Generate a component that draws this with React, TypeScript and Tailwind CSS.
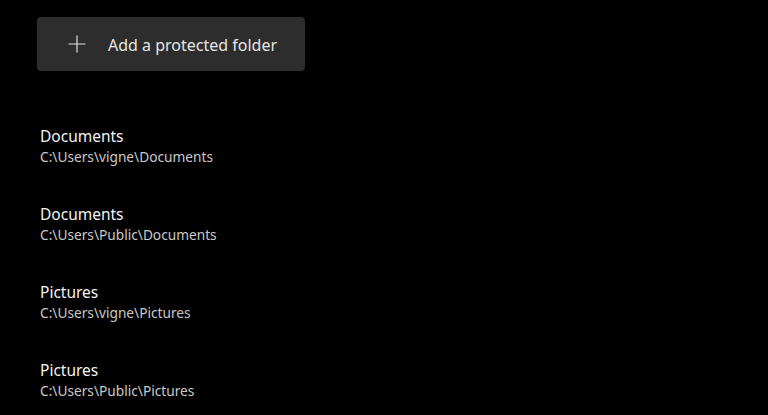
const folders = [
  { name: "Documents", path: "C:\\Users\\vigne\\Documents" },
  { name: "Documents", path: "C:\\Users\\Public\\Documents" },
  { name: "Pictures", path: "C:\\Users\\vigne\\Pictures" },
  { name: "Pictures", path: "C:\\Users\\Public\\Pictures" },
];

export default function App() {
  return (
    <div
      className="w-[768px] h-[415px] bg-black text-white overflow-hidden"
      style={{ fontFamily: '"Noto Sans", "Open Sans", sans-serif' }}
    >
      <div className="pt-[17px] pl-[37px]">
        <button className="flex items-center w-[268px] h-[54px] rounded-[4px] bg-[#2d2d2d] text-[#e6e6e6]">
          <svg className="ml-[31px] w-[18px] h-[18px]" viewBox="0 0 18 18" fill="none" stroke="#e0e0e0" strokeWidth="1.2">
            <path d="M9 0.5V17.5M0.5 9H17.5" />
          </svg>
          <span className="ml-[22px] mt-[2px] text-[16px] leading-[20px]">Add a protected folder</span>
        </button>
      </div>
      <div className="flex flex-col pl-[40px] pt-[55px]">
        {folders.map((f, i) => (
          <div key={i} className="h-[78px] flex flex-col">
            <span className="text-[15.5px] leading-[20px] text-[#f2f2f2]">{f.name}</span>
            <span className="mt-[2px] text-[13.7px] leading-[18px] text-[#c9c9c9]">{f.path}</span>
          </div>
        ))}
      </div>
    </div>
  );
}
